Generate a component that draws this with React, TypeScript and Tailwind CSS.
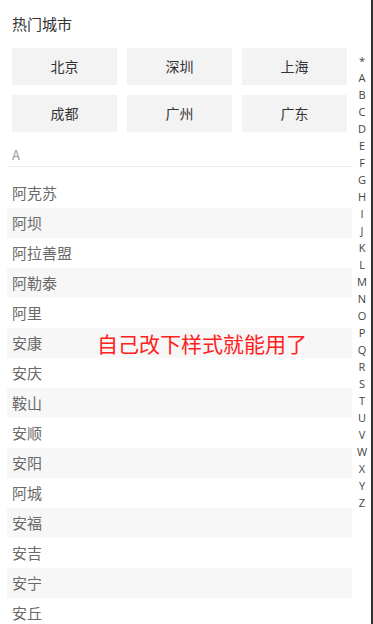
import React from "react";

const hot = ["北京", "深圳", "上海", "成都", "广州", "广东"];
const cities = ["阿克苏", "阿坝", "阿拉善盟", "阿勒泰", "阿里", "安康", "安庆", "鞍山", "安顺", "安阳", "阿城", "安福", "安吉", "安宁", "安丘"];
const letters = ["*", ..."ABCDEFGHIJKLMNOPQRSTUVWXYZ".split("")];

export default function App() {
  return (
    <div
      className="relative w-[373px] h-[624px] overflow-hidden bg-white"
      style={{ fontFamily: '"Noto Sans CJK SC", "Noto Sans", sans-serif' }}
    >
      <div className="w-[352px] pl-[7px]">
        <div className="h-[48px] pl-[5px] flex items-center text-[15px] text-[#333]">热门城市</div>
        <div className="pl-[5px] grid grid-cols-[105px_105px_105px] gap-x-[10px] gap-y-[10px]">
          {hot.map((c) => (
            <div key={c} className="h-[37px] bg-[#f3f3f3] flex items-center justify-center text-[14px] text-[#333]">
              {c}
            </div>
          ))}
        </div>
        <div className="mt-[12px] h-[23px] pl-[5px] flex items-center text-[13px] text-[#999] border-b border-[#eeeeee]">A</div>
        <div className="mt-[11px]">
          {cities.map((c, i) => (
            <div
              key={c}
              className={`h-[30px] pl-[5px] flex items-center text-[15px] text-[#6a6a6a] ${i % 2 === 1 ? "bg-[#f7f7f7]" : "bg-white"}`}
            >
              {c}
            </div>
          ))}
        </div>
      </div>
      <div className="absolute left-[352px] w-[20px] top-[52px] flex flex-col items-center">
        {letters.map((l) => (
          <div
            key={l}
            className="h-[17px] leading-[17px] text-[11px] text-[#444]"
            style={{ fontFamily: '"Open Sans", sans-serif' }}
          >
            {l}
          </div>
        ))}
      </div>
      <div className="absolute left-[97px] top-[329px] text-[21px] leading-[28px] text-[#ff2020]">自己改下样式就能用了</div>
      <div className="absolute right-0 top-0 bottom-0 w-[2px] bg-[#333]" />
    </div>
  );
}
